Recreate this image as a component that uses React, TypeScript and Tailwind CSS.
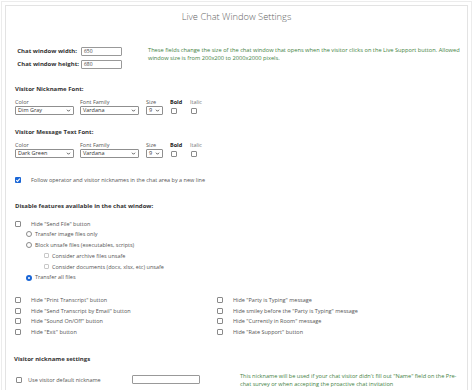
import React from 'react'

const font = { fontFamily: '"Open Sans", "Liberation Sans", sans-serif' }

function Box({ checked = false, small = false }: { checked?: boolean; small?: boolean }) {
  if (checked) {
    return (
      <span className="inline-flex h-[6px] w-[6px] shrink-0 items-center justify-center rounded-[1px] bg-[#1a66d6]">
        <svg viewBox="0 0 10 10" className="h-[6px] w-[6px]">
          <path d="M2 5.2 L4.2 7.3 L8 2.8" stroke="white" strokeWidth="1.8" fill="none" />
        </svg>
      </span>
    )
  }
  return (
    <span
      className={
        small
          ? 'inline-block h-[5px] w-[5px] shrink-0 rounded-[1px] border border-[#c8c8c8] bg-white'
          : 'inline-block h-[6px] w-[6px] shrink-0 rounded-[1px] border border-[#8a8a8a] bg-white'
      }
    />
  )
}

function Radio({ checked = false }: { checked?: boolean }) {
  return checked ? (
    <span className="inline-flex h-[6px] w-[6px] shrink-0 items-center justify-center rounded-full bg-[#1a66d6]">
      <span className="h-[2px] w-[2px] rounded-full bg-white" />
    </span>
  ) : (
    <span className="inline-block h-[6px] w-[6px] shrink-0 rounded-full border border-[#8a8a8a] bg-white" />
  )
}

function Select({ value, w }: { value: string; w: string }) {
  return (
    <div className={`flex h-[9px] items-center justify-between rounded-[1px] border border-[#8f8f8f] bg-white pl-[2px] pr-[2px] ${w}`}>
      <span className="text-[5.5px] leading-none text-[#333]">{value}</span>
      <svg viewBox="0 0 10 10" className="h-[5px] w-[5px]">
        <path d="M2 3.5 L5 6.5 L8 3.5" stroke="#333" strokeWidth="1.6" fill="none" />
      </svg>
    </div>
  )
}

function FontRow({ color }: { color: string }) {
  return (
    <div className="flex items-start text-[5.5px] text-[#555]">
      <div className="flex w-[65px] flex-col">
        <span className="h-[7px] leading-[7px]">Color</span>
        <Select value={color} w="w-[59px]" />
      </div>
      <div className="flex w-[66px] flex-col">
        <span className="h-[7px] leading-[7px]">Font Family</span>
        <Select value="Vardana" w="w-[59px]" />
      </div>
      <div className="flex w-[24px] flex-col">
        <span className="h-[7px] leading-[7px]">Size</span>
        <Select value="9" w="w-[17px]" />
      </div>
      <div className="flex w-[20px] flex-col items-start">
        <span className="h-[7px] font-bold leading-[7px] text-[#222]">Bold</span>
        <div className="mt-[1px] flex h-[8px] items-center pl-[1px]"><Box /></div>
      </div>
      <div className="flex flex-col items-start">
        <span className="h-[7px] leading-[7px] text-[#777]">Italic</span>
        <div className="mt-[1px] flex h-[8px] items-center pl-[1px]"><Box /></div>
      </div>
    </div>
  )
}

function CheckLine({ text }: { text: string }) {
  return (
    <div className="flex h-[10.5px] items-center">
      <Box />
      <span className="ml-[10px] text-[5.5px] text-[#555]">{text}</span>
    </div>
  )
}

export default function App() {
  return (
    <div style={font} className="h-[390px] w-[474px] overflow-hidden bg-white pl-[1px] pr-[2px] pt-[1px]">
      <div className="h-[400px] border border-[#ececec] pl-[3px] pr-[3px] pt-[3px]">
        <div className="h-[400px] border border-[#e3e3e3] bg-white">
          {/* Title */}
          <div className="pt-[5px] text-center text-[9.3px] font-light leading-[12px] text-[#666]">
            Live Chat Window Settings
          </div>

          {/* Window size */}
          <div className="mt-[24px] flex">
            <div className="flex w-[142px] flex-col gap-[4px] pl-[10px]">
              <div className="flex h-[9px] items-center">
                <span className="w-[61px] text-right text-[6px] font-bold text-[#333]">Chat window width:</span>
                <div className="ml-[4px] flex h-[9px] w-[41px] items-center rounded-[1px] border border-[#999] pl-[2px] text-[5px] text-[#444]">650</div>
              </div>
              <div className="flex h-[9px] items-center">
                <span className="w-[63px] text-right text-[6px] font-bold text-[#333]">Chat window height:</span>
                <div className="ml-[2px] flex h-[9px] w-[41px] items-center rounded-[1px] border border-[#999] pl-[2px] text-[5px] text-[#444]">680</div>
              </div>
            </div>
            <p className="-mt-[1px] w-[316px] text-[5.7px] leading-[8px] text-[#3f7f3f]">
              These fields change the size of the chat window that opens when the visitor clicks on the Live Support button. Allowed window size is from 200x200 to 2000x2000 pixels.
            </p>
          </div>

          <div className="pl-[9px]">
            {/* Visitor Nickname Font */}
            <div className="mt-[16px] text-[6px] font-bold leading-[8px] text-[#333]">Visitor Nickname Font:</div>
            <div className="mt-[6px]"><FontRow color="Dim Gray" /></div>

            <div className="mt-[13px] text-[6px] font-bold leading-[8px] text-[#333]">Visitor Message Text Font:</div>
            <div className="mt-[6px]"><FontRow color="Dark Green" /></div>

            <div className="mt-[18px] flex h-[8px] items-center">
              <Box checked />
              <span className="ml-[10px] text-[5.5px] text-[#555]">Follow operator and visitor nicknames in the chat area by a new line</span>
            </div>

            {/* Disable features */}
            <div className="mt-[18px] text-[6px] font-bold leading-[8px] text-[#333]">Disable features available in the chat window:</div>

            <div className="mt-[9px]">
              <div className="flex h-[10px] items-center">
                <Box />
                <span className="ml-[10px] text-[5.5px] text-[#555]">Hide "Send File" button</span>
              </div>
              <div className="pl-[11px]">
                <div className="flex h-[10.8px] items-center">
                  <Radio />
                  <span className="ml-[3px] text-[5.5px] text-[#555]">Transfer image files only</span>
                </div>
                <div className="flex h-[10.8px] items-center">
                  <Radio />
                  <span className="ml-[3px] text-[5.5px] text-[#555]">Block unsafe files (executables, scripts)</span>
                </div>
                <div className="flex h-[10.8px] items-center pl-[18px]">
                  <Box small />
                  <span className="ml-[3px] text-[5.5px] text-[#555]">Consider archive files unsafe</span>
                </div>
                <div className="flex h-[10.8px] items-center pl-[18px]">
                  <Box small />
                  <span className="ml-[3px] text-[5.5px] text-[#555]">Consider documents (docx, xlsx, etc) unsafe</span>
                </div>
                <div className="flex h-[10.8px] items-center">
                  <Radio checked />
                  <span className="ml-[3px] text-[5.5px] text-[#555]">Transfer all files</span>
                </div>
              </div>

              {/* Two columns */}
              <div className="mt-[12px] grid grid-cols-[202px_1fr]">
                <div className="flex flex-col">
                  <CheckLine text={'Hide "Print Transcript" button'} />
                  <CheckLine text={'Hide "Send Transcript by Email" button'} />
                  <CheckLine text={'Hide "Sound On/Off" button'} />
                  <CheckLine text={'Hide "Exit" button'} />
                </div>
                <div className="flex flex-col">
                  <CheckLine text={'Hide "Party is Typing" message'} />
                  <CheckLine text={'Hide smiley before the "Party is Typing" message'} />
                  <CheckLine text={'Hide "Currently in Room" message'} />
                  <CheckLine text={'Hide "Rate Support" button'} />
                </div>
              </div>
            </div>

            {/* Visitor nickname settings */}
            <div className="mt-[18px] -ml-[1px] text-[6px] font-bold leading-[8px] text-[#333]">Visitor nickname settings</div>
            <div className="mt-[12px] flex items-start pl-[1px]">
              <div className="flex h-[10px] w-[116px] items-center">
                <Box />
                <span className="ml-[6px] text-[5.5px] text-[#555]">Use visitor default nickname</span>
              </div>
              <div className="h-[9px] w-[68px] rounded-[1px] border border-[#999] bg-white" />
              <p className="ml-[40px] -mt-[3px] w-[226px] text-[5.6px] leading-[8px] text-[#3f7f3f]">
                This nickname will be used if your chat visitor didn't fill out "Name" field on the Pre-chat survey or when accepting the proactive chat invitation
              </p>
            </div>
          </div>
        </div>
      </div>
    </div>
  )
}
